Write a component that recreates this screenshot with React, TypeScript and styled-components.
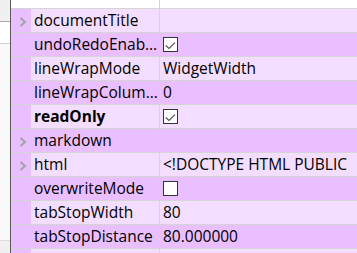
import React from 'react';
import styled, {createGlobalStyle} from "styled-components";

const GlobalStyle = createGlobalStyle`
  html, body {
    margin: 0;
    padding: 0;
    overflow: hidden;
    background: #f0f0f0;
  }
  body {
    font-family: "Open Sans", "Noto Sans", sans-serif;
    font-size: 15.5px;
    color: #000;
  }
`

const LIGHT = "#f4deff";
const DARK = "#eabfff";

type Prop = {
    name: string;
    value?: string;
    check?: boolean;
    expandable?: boolean;
    bold?: boolean;
};

const props: Prop[] = [
    {name: "documentTitle", expandable: true},
    {name: "undoRedoEnab…", check: true},
    {name: "lineWrapMode", value: "WidgetWidth"},
    {name: "lineWrapColum…", value: "0"},
    {name: "readOnly", check: true, bold: true},
    {name: "markdown", expandable: true},
    {name: "html", value: "<!DOCTYPE HTML PUBLIC", expandable: true},
    {name: "overwriteMode", check: false},
    {name: "tabStopWidth", value: "80"},
    {name: "tabStopDistance", value: "80.000000"},
    {name: ""},
];

const CheckBox = ({checked}: { checked: boolean }) => (
    <Box>
        {checked && (
            <svg width="13" height="13" viewBox="0 0 13 13">
                <polyline points="1.8,7.6 5,10.4 11,4.6" fill="none" stroke="#555" strokeWidth="1.3"/>
            </svg>
        )}
    </Box>
);

const Arrow = () => (
    <svg width="8" height="10" viewBox="0 0 8 10">
        <polyline points="1.5,1 6,5 1.5,9" fill="none" stroke="#a3a3a3" strokeWidth="2"/>
    </svg>
);

export default function App() {
    return (
        <>
            <GlobalStyle/>
            <Screen>
                <SidePanel>
                    <InputStub/>
                    <Spacer/>
                    <BottomStrip/>
                </SidePanel>
                <Tree>
                    <Rows>
                        <Row $bg="#ffffff" $branch="#ffffff">
                            <Branch/>
                            <NameCell/>
                            <ValueCell/>
                        </Row>
                        {props.map((p, i) => (
                            <Row key={i} $bg={i % 2 === 0 ? LIGHT : DARK} $branch={DARK}>
                                <Branch>{p.expandable && <Arrow/>}</Branch>
                                <NameCell $bold={p.bold}>{p.name}</NameCell>
                                <ValueCell>
                                    {p.check !== undefined ? <CheckBox checked={p.check}/> : p.value}
                                </ValueCell>
                            </Row>
                        ))}
                    </Rows>
                </Tree>
            </Screen>
        </>
    );
}

const Screen = styled.div`
  display: flex;
  width: 357px;
  height: 253px;
  overflow: hidden;
`

const SidePanel = styled.div`
  width: 10px;
  flex-shrink: 0;
  display: flex;
  flex-direction: column;
  background: #f0f0f0;
`

const InputStub = styled.div`
  margin-top: 21px;
  height: 21px;
  background: #ffffff;
  border-top: 1px solid #a8a8a8;
  border-bottom: 1px solid #d0d0d0;
`

const Spacer = styled.div`
  flex: 1;
  background: #f9f9f9;
`

const BottomStrip = styled.div`
  height: 12px;
  border-top: 1px solid #dcdcdc;
  background: #f0f0f0;
`

const Tree = styled.div`
  flex: 1;
  min-width: 0;
  overflow: hidden;
  border-left: 1px solid #5a5a5a;
  background: #ffffff;
`

const Rows = styled.div`
  margin-top: -15px;
  display: flex;
  flex-direction: column;
`

const Row = styled.div<{ $bg: string; $branch: string }>`
  display: grid;
  grid-template-columns: 20px 129px 1fr;
  height: 23px;
  border-bottom: 1px solid #d5d5d5;
  background: ${p => p.$bg};
  flex-shrink: 0;

  & > :first-child {
    background: ${p => p.$branch};
  }
`

const Branch = styled.div`
  display: flex;
  align-items: center;
  justify-content: center;
  padding-left: 3px;
  padding-top: 2px;
`

const NameCell = styled.div<{ $bold?: boolean }>`
  display: flex;
  align-items: center;
  padding-left: 3px;
  border-right: 1px solid #d5d5d5;
  white-space: nowrap;
  overflow: hidden;
  font-weight: ${p => (p.$bold ? 700 : 400)};
  line-height: 23px;
`

const ValueCell = styled.div`
  display: flex;
  align-items: center;
  padding-left: 3px;
  white-space: nowrap;
  overflow: hidden;
  line-height: 23px;
`

const Box = styled.div`
  width: 13px;
  height: 13px;
  border: 1px solid #333;
  background: #fff;
  display: flex;
`
